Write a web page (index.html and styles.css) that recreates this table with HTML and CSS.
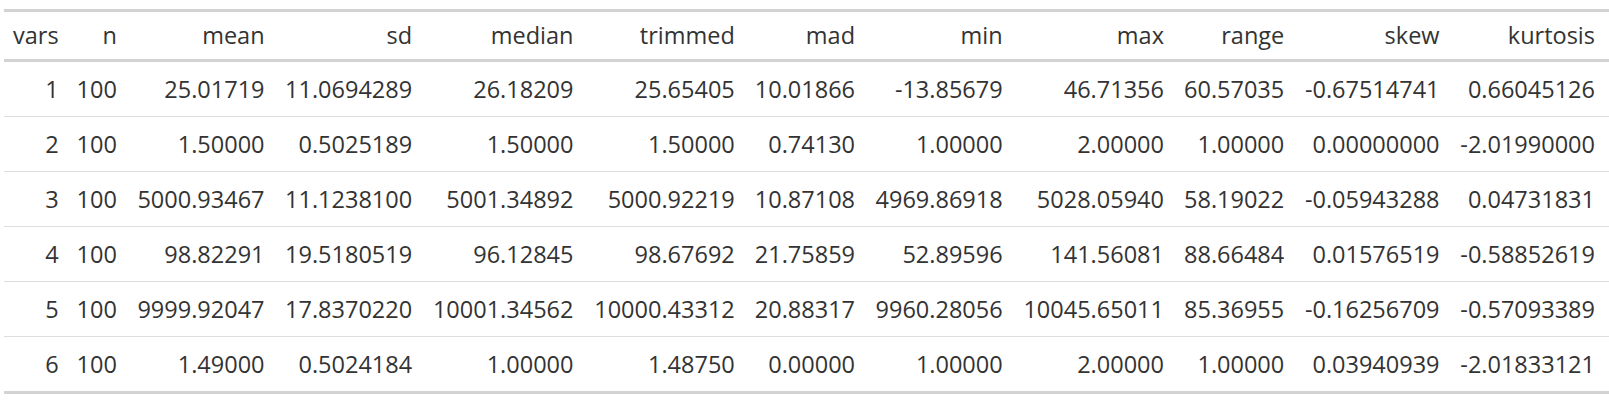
FILE: index.html
```html
<!DOCTYPE html>
<html>
<head>
<meta charset="utf-8">
<link rel="stylesheet" href="styles.css">
</head>
<body>
<table class="desc">
<thead>
<tr><th class="c-vars">vars</th><th class="c-n">n</th><th>mean</th><th>sd</th><th>median</th><th>trimmed</th><th>mad</th><th>min</th><th>max</th><th>range</th><th>skew</th><th>kurtosis</th></tr>
</thead>
<tbody>
<tr><td>1</td><td>100</td><td>25.01719</td><td>11.0694289</td><td>26.18209</td><td>25.65405</td><td>10.01866</td><td>-13.85679</td><td>46.71356</td><td>60.57035</td><td>-0.67514741</td><td>0.66045126</td></tr>
<tr><td>2</td><td>100</td><td>1.50000</td><td>0.5025189</td><td>1.50000</td><td>1.50000</td><td>0.74130</td><td>1.00000</td><td>2.00000</td><td>1.00000</td><td>0.00000000</td><td>-2.01990000</td></tr>
<tr><td>3</td><td>100</td><td>5000.93467</td><td>11.1238100</td><td>5001.34892</td><td>5000.92219</td><td>10.87108</td><td>4969.86918</td><td>5028.05940</td><td>58.19022</td><td>-0.05943288</td><td>0.04731831</td></tr>
<tr><td>4</td><td>100</td><td>98.82291</td><td>19.5180519</td><td>96.12845</td><td>98.67692</td><td>21.75859</td><td>52.89596</td><td>141.56081</td><td>88.66484</td><td>0.01576519</td><td>-0.58852619</td></tr>
<tr><td>5</td><td>100</td><td>9999.92047</td><td>17.8370220</td><td>10001.34562</td><td>10000.43312</td><td>20.88317</td><td>9960.28056</td><td>10045.65011</td><td>85.36955</td><td>-0.16256709</td><td>-0.57093389</td></tr>
<tr><td>6</td><td>100</td><td>1.49000</td><td>0.5024184</td><td>1.00000</td><td>1.48750</td><td>0.00000</td><td>1.00000</td><td>2.00000</td><td>1.00000</td><td>0.03940939</td><td>-2.01833121</td></tr>
</tbody>
</table>
</body>
</html>
```
FILE: styles.css
```css
html, body {
  margin: 0;
  padding: 0;
  background: #fff;
}
body {
  padding: 9px 0 0 4px;
  font-family: "Open Sans", "Noto Sans", sans-serif;
  font-size: 23.5px;
  color: #333;
  overflow: hidden;
}
.desc {
  width: 1605px;
  border-collapse: collapse;
  border-top: 3px solid #d3d3d3;
  border-bottom: 3px solid #d3d3d3;
  white-space: nowrap;
}
.desc th {
  font-weight: normal;
  text-align: right;
  padding: 0 9px;
  line-height: 47px;
  border-bottom: 3px solid #d3d3d3;
}
.desc .c-vars {
  width: 42px;
}
.desc .c-n {
  width: 38px;
}
.desc td {
  text-align: right;
  padding: 0 9px;
  line-height: 54px;
  border-bottom: 1px solid #ddd;
}
.desc th:last-child,
.desc td:last-child {
  padding-right: 14px;
}
.desc tbody tr:last-child td {
  border-bottom: 3px solid #d3d3d3;
}
```
